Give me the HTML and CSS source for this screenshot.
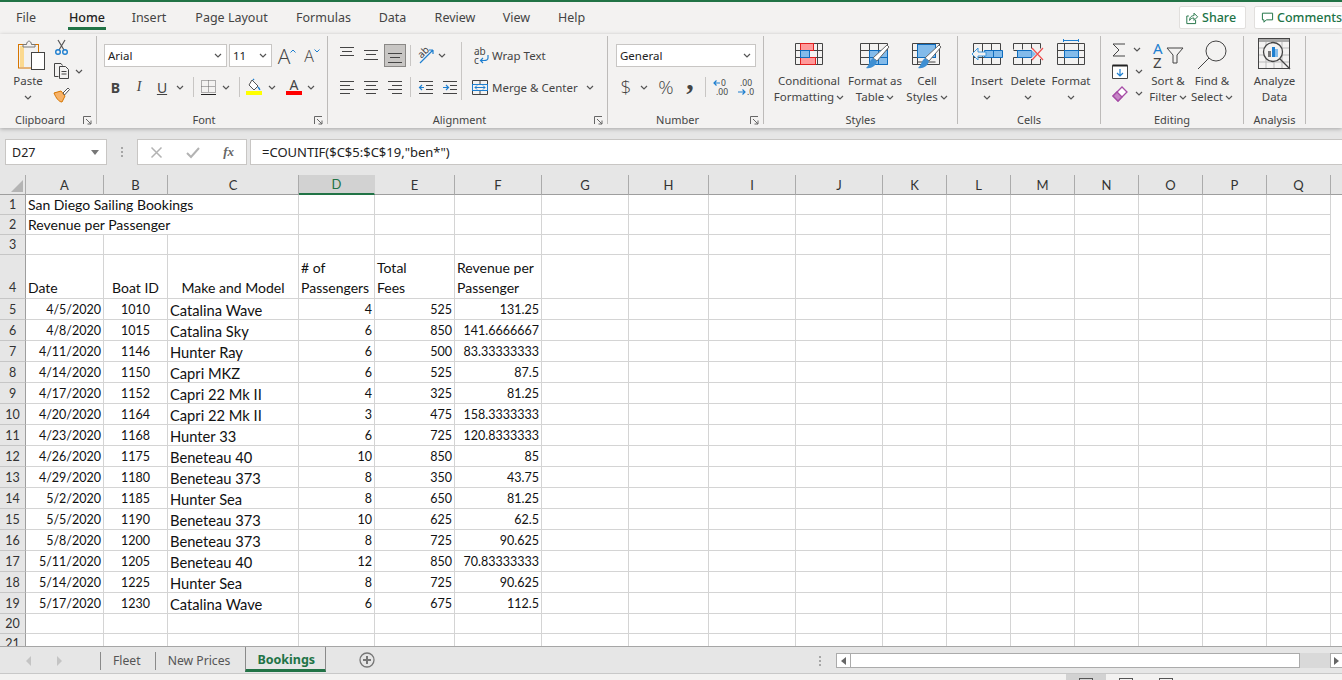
FILE: index.html
```html
<!DOCTYPE html>
<html lang="en">
<head>
<meta charset="utf-8">
<title>Bookings - Excel</title>
<link rel="stylesheet" href="styles.css">
</head>
<body>
<svg class="sprite" aria-hidden="true">
  <symbol id="chev" viewBox="0 0 8 5"><path d="M1 1l3 3 3-3" fill="none" stroke="#555" stroke-width="1.2"/></symbol>
  <symbol id="launch" viewBox="0 0 9 9"><path d="M.5 8V.5H8M3 3l5 5M8 4.5V8H4.5" fill="none" stroke="#666"/></symbol>
  <symbol id="brush" viewBox="0 0 24 26"><path d="M21 1l2 2-12 14-4-3z" fill="#fff" stroke="#666"/><path d="M7 14l4 3c-1 5-6 8-11 7 3-2 3-7 7-10z" fill="#3f8fd2"/></symbol>
</svg>

<div class="accent"></div>

<header class="tabs">
  <nav class="tablist">
    <span class="tab">File</span>
    <span class="tab tab-on">Home</span>
    <span class="tab">Insert</span>
    <span class="tab">Page Layout</span>
    <span class="tab">Formulas</span>
    <span class="tab">Data</span>
    <span class="tab">Review</span>
    <span class="tab">View</span>
    <span class="tab">Help</span>
  </nav>
  <button class="pill pill-share">
    <svg width="12" height="12" viewBox="0 0 15 15"><path d="M3.500 5H1v9.500h11V10M4.500 10.500c0-4.500 3-6 5.500-6V1.500l4.500 4.500L10 10.500V7.500c-2.500 0-4.500.8-5.500 3z" fill="none" stroke="#217346" stroke-width="1.200"/></svg>
    Share
  </button>
  <button class="pill pill-comments">
    <svg width="11" height="11" viewBox="0 0 14 14"><path d="M.5 1.500h13v8.500h-8l-3 3v-3h-2z" fill="none" stroke="#217346" stroke-width="1.250"/></svg>
    Comments
  </button>
</header>

<section class="ribbon">
  <!-- Clipboard -->
  <div class="group g-clip">
    <div class="body clip-body">
      <div class="big paste-col">
        <div class="big-icon">
          <svg width="28" height="31" viewBox="0 0 28 31"><rect x=".5" y="4.500" width="20" height="23.500" fill="#f3f2f1" stroke="#d67500"/><rect x="2" y="6" width="4" height="21" fill="#fbd98f"/><path d="M5 7V4.500h3.500C9 0 13 0 13.500 4.500H17V7z" fill="#f3f2f1" stroke="#777"/><rect x="13.500" y="12.500" width="13" height="17" fill="#fff" stroke="#444"/></svg>
        </div>
        <span>Paste</span>
        <svg class="chev chev-line"><use href="#chev"/></svg>
      </div>
      <div class="clip-stack">
        <div class="clip-row">
          <svg width="17" height="16" viewBox="0 0 17 16"><path d="M5 1l6 10M12 1L6 11" fill="none" stroke="#555" stroke-width="1.200"/><circle cx="5" cy="13" r="2.300" fill="none" stroke="#1e7fd0" stroke-width="1.400"/><circle cx="12" cy="13" r="2.300" fill="none" stroke="#1e7fd0" stroke-width="1.400"/></svg>
        </div>
        <div class="clip-row">
          <svg width="17" height="16" viewBox="0 0 17 16"><path d="M5.500 13.500H1.500V.5H8l1.500 2" fill="none" stroke="#444"/><path d="M6.500 3.500h6l3 3v9h-9zM8.500 8.500h5M8.500 11h5" fill="#f3f2f1" stroke="#444"/></svg>
          <svg class="chev"><use href="#chev"/></svg>
        </div>
        <div class="clip-row">
          <svg width="17" height="16" viewBox="0 0 17 16"><path d="M1 6l7-2 4 5-3 6C6 15 3 11 1 6z" fill="#f7b267" stroke="#d67500"/><path d="M10 6l5-5 1.500 1.500-5 5.500z" fill="#fff" stroke="#555"/></svg>
        </div>
      </div>
    </div>
    <div class="label"><span></span><span>Clipboard</span><svg class="launch"><use href="#launch"/></svg></div>
  </div>

  <!-- Font -->
  <div class="group g-font">
    <div class="body">
      <div class="row row-top">
        <div class="combo w123"><span>Arial</span><svg class="chev"><use href="#chev"/></svg></div>
        <div class="combo w43 ml2"><span>11</span><svg class="chev"><use href="#chev"/></svg></div>
        <span class="tool w26 ml2 grow-a">A<svg class="caret" width="6" height="4" viewBox="0 0 6 4"><path d="M.5 3.500L3 1l2.500 2.500" fill="none" stroke="#1e7fd0"/></svg></span>
        <span class="tool w24 shrink-a">A<svg class="caret" width="6" height="4" viewBox="0 0 6 4"><path d="M.5.5L3 3 5.500.5" fill="none" stroke="#1e7fd0"/></svg></span>
      </div>
      <div class="row row-low">
        <span class="tool w23 glyph bold">B</span>
        <span class="tool w24 glyph italic">I</span>
        <span class="tool w22 glyph under">U</span>
        <span class="tool w14"><svg class="chev"><use href="#chev"/></svg></span>
        <span class="tool w12"><i class="vsep"></i></span>
        <span class="tool w19"><svg width="15" height="15" viewBox="0 0 15 15"><path d="M.5.5h14v12H.5zM7.500.5v12M.5 6.500h14" fill="none" stroke="#666" stroke-dasharray="1 1"/><path d="M0 14.500h15" stroke="#222"/></svg></span>
        <span class="tool w16"><svg class="chev"><use href="#chev"/></svg></span>
        <span class="tool w10"><i class="vsep"></i></span>
        <span class="tool w20 colored">
          <svg width="14" height="12" viewBox="0 0 14 12"><path d="M5 1l6 6-4 4-5-5z" fill="#fff" stroke="#555"/><path d="M11 8c1 1 2 2 1.500 3M6 1l1-1" fill="none" stroke="#1e7fd0" stroke-width="1.500"/></svg>
          <i class="bar bar-yellow"></i>
        </span>
        <span class="tool w16"><svg class="chev"><use href="#chev"/></svg></span>
        <span class="tool w20 ml4 colored"><span class="font-a">A</span><i class="bar bar-red"></i></span>
        <span class="tool w14"><svg class="chev"><use href="#chev"/></svg></span>
      </div>
    </div>
    <div class="label"><span></span><span>Font</span><svg class="launch"><use href="#launch"/></svg></div>
  </div>

  <!-- Alignment -->
  <div class="group g-align">
    <div class="body align-body">
      <div class="stack">
        <div class="row row-top">
          <span class="tool w22"><svg width="14" height="23" viewBox="0 0 14 23"><path d="M0 3.500h14M2 7.500h10M0 11.500h14" stroke="#444"/></svg></span>
          <span class="tool w26"><svg width="14" height="23" viewBox="0 0 14 23"><path d="M0 6.500h14M2 10.500h10M0 15.500h14" stroke="#444"/></svg></span>
          <span class="tool w22 tool-on"><svg width="14" height="21" viewBox="0 0 14 21"><path d="M0 8.500h14M2 12.500h10M0 17.500h14" stroke="#444"/></svg></span>
          <span class="tool w8"><i class="vsep vsep-top"></i></span>
          <span class="tool w24"><svg width="16" height="17" viewBox="0 0 16 17"><path d="M2 16L15 3M15 3h-4M15 3v4" fill="none" stroke="#1e7fd0" stroke-width="1.200"/><text x="0" y="9" class="svg-txt" transform="rotate(-45 5 6)">ab</text></svg></span>
          <span class="tool w8"><svg class="chev"><use href="#chev"/></svg></span>
        </div>
        <div class="row row-low">
          <span class="tool w22"><svg width="14" height="14" viewBox="0 0 14 14"><path d="M0 1.500h14M0 5.500h10M0 9.500h14M0 13.500h10" stroke="#444"/></svg></span>
          <span class="tool w26"><svg width="14" height="14" viewBox="0 0 14 14"><path d="M0 1.500h14M2 5.500h10M0 9.500h14M2 13.500h10" stroke="#444"/></svg></span>
          <span class="tool w22"><svg width="14" height="14" viewBox="0 0 14 14"><path d="M0 1.500h14M4 5.500h10M0 9.500h14M4 13.500h10" stroke="#444"/></svg></span>
          <span class="tool w8"><i class="vsep"></i></span>
          <span class="tool w24"><svg width="14" height="14" viewBox="0 0 14 14"><path d="M0 1.500h14M7 5.500h7M7 9.500h7M0 13.500h14" stroke="#444"/><path d="M0 7.500h5M3 5L.5 7.500 3 10" fill="none" stroke="#1e7fd0" stroke-width="1.200"/></svg></span>
          <span class="tool w24"><svg width="14" height="14" viewBox="0 0 14 14"><path d="M0 1.500h14M7 5.500h7M7 9.500h7M0 13.500h14" stroke="#444"/><path d="M0 7.500h5M3 5l2.500 2.500L3 10" fill="none" stroke="#1e7fd0" stroke-width="1.200"/></svg></span>
        </div>
      </div>
      <i class="tall-sep"></i>
      <div class="stack">
        <div class="row row-top">
          <span class="wide-btn wrap-btn">
            <svg width="15" height="18" viewBox="0 0 15 18"><text x="0" y="8" class="svg-txt">ab</text><text x="0" y="17" class="svg-txt">c</text><path d="M14 8v3c0 2-2 2.500-4 2.500H7M9 11l-2.500 2.500L9 16" fill="none" stroke="#1e7fd0" stroke-width="1.200"/></svg>
            Wrap Text
          </span>
        </div>
        <div class="row row-low">
          <span class="wide-btn merge-btn">
            <svg width="16" height="15" viewBox="0 0 16 15"><path d="M.5.5h15v14H.5zM.5 4.500h15M.5 10.500h15M8 .5v4M8 10.500v4" fill="none" stroke="#444"/><rect x=".5" y="4.500" width="15" height="6" fill="#f3f2f1" stroke="#1e7fd0"/><path d="M3 7.500h10M5 5.500l-2 2 2 2M11 5.500l2 2-2 2" fill="none" stroke="#1e7fd0"/></svg>
            Merge &amp; Center
            <svg class="chev merge-chev"><use href="#chev"/></svg>
          </span>
        </div>
      </div>
    </div>
    <div class="label"><span></span><span>Alignment</span><svg class="launch"><use href="#launch"/></svg></div>
  </div>

  <!-- Number -->
  <div class="group g-num">
    <div class="body">
      <div class="row row-top">
        <div class="combo w140"><span>General</span><svg class="chev"><use href="#chev"/></svg></div>
      </div>
      <div class="row row-low">
        <span class="tool w20 glyph big-glyph">$</span>
        <span class="tool w16"><svg class="chev"><use href="#chev"/></svg></span>
        <span class="tool w28 glyph big-glyph">%</span>
        <span class="tool w20 glyph comma">,</span>
        <span class="tool w10"><i class="vsep"></i></span>
        <span class="tool w22"><svg width="17" height="17" viewBox="0 0 17 17"><text x="8" y="7" class="svg-num">0</text><text x="3" y="16" class="svg-num">.00</text><path d="M1 4h6M3.500 1.500L1 4l2.500 2.500" fill="none" stroke="#1e7fd0" stroke-width="1.200"/></svg></span>
        <span class="tool w26"><svg width="17" height="17" viewBox="0 0 17 17"><text x="3" y="7" class="svg-num">.00</text><text x="10" y="16" class="svg-num">.0</text><path d="M1 13h7M5.500 10.500L8 13l-2.500 2.500" fill="none" stroke="#1e7fd0" stroke-width="1.200"/></svg></span>
      </div>
    </div>
    <div class="label"><span></span><span>Number</span><svg class="launch"><use href="#launch"/></svg></div>
  </div>

  <!-- Styles -->
  <div class="group g-styles">
    <div class="body cols">
      <div class="big w74">
        <div class="big-icon pt7">
          <svg width="28" height="22" viewBox="0 0 28 22"><path d="M.5.5h27v21H.5zM5.500.5v21M14.500.5v21M22.500.5v21M.5 7.500h27M.5 14.500h27" fill="none" stroke="#444"/><rect x="5.500" y=".5" width="13" height="7" fill="#ff9999" stroke="#e02020"/><rect x="5.500" y="14.500" width="15" height="7" fill="#ff9999" stroke="#e02020"/><rect x="5.500" y="7.500" width="9" height="7" fill="#83bbea" stroke="#0f6cbd"/></svg>
        </div>
        <span>Conditional</span>
        <span class="drop">Formatting <svg class="chev"><use href="#chev"/></svg></span>
      </div>
      <div class="big w58">
        <div class="big-icon pt7">
          <svg width="30" height="27" viewBox="0 0 30 27"><path d="M.5.5h27v21H.5zM9.500.5v21M18.500.5v21M.5 7.500h27M.5 14.500h27" fill="none" stroke="#444"/><path d="M9.500 7.500h18v14h-18z" fill="#83bbea" stroke="#0f6cbd"/><path d="M18.500 7.500v14M9.500 14.500h18" stroke="#0f6cbd"/><use href="#brush" x="6" y="1" width="24" height="26"/></svg>
        </div>
        <span>Format as</span>
        <span class="drop">Table <svg class="chev"><use href="#chev"/></svg></span>
      </div>
      <div class="big w46">
        <div class="big-icon pt7">
          <svg width="30" height="27" viewBox="0 0 30 27"><path d="M.5.5h27v21H.5zM5.500.5v4M5.500 14.500v7M23.500.5v4M.5 7.500h5M.5 14.500h5" fill="none" stroke="#444"/><rect x="5.500" y="1.500" width="18" height="13" fill="#83bbea" stroke="#0f6cbd"/><path d="M5.500 19h18" stroke="#444"/><use href="#brush" x="6" y="1" width="24" height="26"/></svg>
        </div>
        <span>Cell</span>
        <span class="drop">Styles <svg class="chev"><use href="#chev"/></svg></span>
      </div>
    </div>
    <div class="label label-plain">Styles</div>
  </div>

  <!-- Cells -->
  <div class="group g-cells">
    <div class="body cols">
      <div class="big w42">
        <div class="big-icon pt7">
          <svg width="33" height="22" viewBox="0 0 33 22"><path d="M2.500.5h27v21h-27zM11.500.5v21M20.500.5v21M2.500 14.500h27" fill="none" stroke="#444"/><path d="M13.500 7.500h18v7h-18z" fill="#83bbea" stroke="#0f6cbd"/><path d="M22.500 7.500v7" stroke="#0f6cbd"/><path d="M15 9H7V5L1 11l6 6v-4h8z" fill="#f3f2f1" stroke="#3a96dd"/></svg>
        </div>
        <span>Insert</span>
        <svg class="chev chev-line"><use href="#chev"/></svg>
      </div>
      <div class="big w40">
        <div class="big-icon pt7">
          <svg width="31" height="22" viewBox="0 0 31 22"><path d="M.5.5h27M.5 21.500h27M.5.5v6M.5 14.500v7M9.500.5v6M9.500 14.500v7M18.500.5v5M18.500 16v5.500M27.500.5v5M27.500 16v5.500" fill="none" stroke="#444"/><path d="M.5 7.500h4M.5 14.500h4" stroke="#444"/><rect x="4.500" y="7.500" width="14" height="7" fill="#83bbea" stroke="#0f6cbd"/><path d="M18.500 7.500l4 3.500-4 3.500" fill="#83bbea" stroke="#83bbea"/><path d="M19 5l11 12M30 5L19 17" stroke="#f05050" stroke-width="1.200"/></svg>
        </div>
        <span>Delete</span>
        <svg class="chev chev-line"><use href="#chev"/></svg>
      </div>
      <div class="big w46">
        <div class="big-icon pt3">
          <svg width="28" height="26" viewBox="0 0 28 26"><path d="M6 1.500h16M6.500 0v3M21.500 0v3" stroke="#1e7fd0" fill="none"/><path d="M.5 4.500h27v21H.5zM7.500 4.500v21M21.500 4.500v21M.5 11.500h27M.5 18.500h27" fill="none" stroke="#444"/><rect x="7.500" y="11.500" width="14" height="7" fill="#83bbea" stroke="#0f6cbd"/></svg>
        </div>
        <span>Format</span>
        <svg class="chev chev-line"><use href="#chev"/></svg>
      </div>
    </div>
    <div class="label label-plain">Cells</div>
  </div>

  <!-- Editing -->
  <div class="group g-edit">
    <div class="body cols">
      <div class="edit-stack">
        <div class="edit-row sum-row">
          <svg width="14" height="14" viewBox="0 0 14 14"><path d="M13 1H1l6 6-6 6h12" fill="none" stroke="#444"/></svg>
          <svg class="chev"><use href="#chev"/></svg>
        </div>
        <div class="edit-row">
          <svg width="16" height="15" viewBox="0 0 16 15"><path d="M.5 1.500h15v13H.5z" fill="#fff" stroke="#444"/><path d="M.5 1.500h15" stroke="#222" stroke-width="2"/><path d="M8 5v7M5 9l3 3 3-3" fill="none" stroke="#1e7fd0" stroke-width="1.200"/></svg>
          <svg class="chev"><use href="#chev"/></svg>
        </div>
        <div class="edit-row">
          <svg width="16" height="16" viewBox="0 0 16 16"><path d="M1 10l9-9 5 5-9 9z" fill="#fff" stroke="#a64ca6" stroke-width="1.300"/><path d="M1 10l4-4 5 5-4 4z" fill="#c685c6" stroke="#a64ca6" stroke-width="1.300"/></svg>
          <svg class="chev"><use href="#chev"/></svg>
        </div>
      </div>
      <div class="big w46">
        <div class="big-icon pt5">
          <svg width="31" height="28" viewBox="0 0 31 28"><text x="0" y="13" class="svg-az svg-blue">A</text><text x="0" y="27" class="svg-az">Z</text><path d="M14 7h16l-6 7v8h-4v-8z" fill="#f3f2f1" stroke="#444"/></svg>
        </div>
        <span>Sort &amp;</span>
        <span class="drop">Filter <svg class="chev"><use href="#chev"/></svg></span>
      </div>
      <div class="big w42">
        <div class="big-icon pt4">
          <svg width="30" height="30" viewBox="0 0 30 30"><circle cx="19" cy="11" r="10" fill="none" stroke="#444"/><path d="M12 18L1 29" stroke="#444"/></svg>
        </div>
        <span>Find &amp;</span>
        <span class="drop">Select <svg class="chev"><use href="#chev"/></svg></span>
      </div>
    </div>
    <div class="label label-plain">Editing</div>
  </div>

  <!-- Analysis -->
  <div class="group g-an">
    <div class="body cols">
      <div class="big w61">
        <div class="big-icon pt2">
          <svg width="33" height="33" viewBox="0 0 33 33"><rect x=".5" y=".5" width="31" height="30" fill="#f3f2f1" stroke="#444"/><rect x="1" y="1" width="30" height="3" fill="#a8a8a8"/><path d="M1 10h30M1 17h30M1 24h30M8 4v26M16 4v26M24 4v26" stroke="#bbb" fill="none"/><circle cx="15" cy="14" r="9.500" fill="#f3f2f1" stroke="#444" stroke-width="1.300"/><rect x="10" y="13" width="3" height="6" fill="#777"/><rect x="14" y="9" width="3" height="10" fill="#1e7fd0"/><rect x="17" y="11" width="3" height="8" fill="#83bbea"/><path d="M22 21l10 10" stroke="#444" stroke-width="1.300"/></svg>
        </div>
        <span>Analyze</span>
        <span>Data</span>
      </div>
    </div>
    <div class="label label-plain">Analysis</div>
  </div>
</section>

<section class="formula">
  <div class="namebox"><span>D27</span><i class="down-tri"></i></div>
  <div class="fdots"><i></i><i></i><i></i></div>
  <div class="fbtns">
    <svg width="13" height="13" viewBox="0 0 13 13"><path d="M1.500 1.500l10 10M11.500 1.500l-10 10" stroke="#b3b3b3" stroke-width="1.500"/></svg>
    <svg width="14" height="13" viewBox="0 0 14 13"><path d="M1 7l4 4 8-9" fill="none" stroke="#b3b3b3" stroke-width="2"/></svg>
    <span class="fx">fx</span>
  </div>
  <div class="fbox">=COUNTIF($C$5:$C$19,"ben*")</div>
</section>

<main class="sheet">
<table class="grid">
  <colgroup>
    <col class="c-rh"><col class="c-a"><col class="c-b"><col class="c-c"><col class="c-d"><col class="c-e"><col class="c-f"><col class="c-g"><col class="c-h"><col class="c-i"><col class="c-j"><col class="c-k"><col class="c-k"><col class="c-k"><col class="c-k"><col class="c-k"><col class="c-k"><col class="c-k"><col class="c-r">
  </colgroup>
  <thead>
    <tr class="colhead">
      <th class="corner"><i></i></th><th>A</th><th>B</th><th>C</th><th class="col-on">D</th><th>E</th><th>F</th><th>G</th><th>H</th><th>I</th><th>J</th><th>K</th><th>L</th><th>M</th><th>N</th><th>O</th><th>P</th><th>Q</th><th></th>
    </tr>
  </thead>
  <tbody>
    <tr class="h20"><th>1</th><td colspan="3">San Diego Sailing Bookings</td><td></td><td></td><td></td><td></td><td></td><td></td><td></td><td></td><td></td><td></td><td></td><td></td><td></td><td></td></tr>
    <tr class="h20"><th>2</th><td colspan="3">Revenue per Passenger</td><td></td><td></td><td></td><td></td><td></td><td></td><td></td><td></td><td></td><td></td><td></td><td></td><td></td><td></td></tr>
    <tr class="h20"><th>3</th><td></td><td></td><td></td><td></td><td></td><td></td><td></td><td></td><td></td><td></td><td></td><td></td><td></td><td></td><td></td><td></td><td></td></tr>
    <tr class="h44"><th>4</th><td>Date</td><td class="ctr">Boat ID</td><td class="ctr">Make and Model</td><td># of<br>Passengers</td><td>Total<br>Fees</td><td>Revenue per<br>Passenger</td><td></td><td></td><td></td><td></td><td></td><td></td><td></td><td></td><td></td><td></td><td></td><td></td></tr>
    <tr><th>5</th><td class="num">4/5/2020</td><td class="id">1010</td><td class="mk">Catalina Wave</td><td class="num">4</td><td class="num">525</td><td class="num">131.25</td><td></td><td></td><td></td><td></td><td></td><td></td><td></td><td></td><td></td><td></td><td></td><td></td></tr>
    <tr><th>6</th><td class="num">4/8/2020</td><td class="id">1015</td><td class="mk">Catalina Sky</td><td class="num">6</td><td class="num">850</td><td class="num">141.6666667</td><td></td><td></td><td></td><td></td><td></td><td></td><td></td><td></td><td></td><td></td><td></td><td></td></tr>
    <tr><th>7</th><td class="num">4/11/2020</td><td class="id">1146</td><td class="mk">Hunter Ray</td><td class="num">6</td><td class="num">500</td><td class="num">83.33333333</td><td></td><td></td><td></td><td></td><td></td><td></td><td></td><td></td><td></td><td></td><td></td><td></td></tr>
    <tr><th>8</th><td class="num">4/14/2020</td><td class="id">1150</td><td class="mk">Capri MKZ</td><td class="num">6</td><td class="num">525</td><td class="num">87.5</td><td></td><td></td><td></td><td></td><td></td><td></td><td></td><td></td><td></td><td></td><td></td><td></td></tr>
    <tr><th>9</th><td class="num">4/17/2020</td><td class="id">1152</td><td class="mk">Capri 22 Mk II</td><td class="num">4</td><td class="num">325</td><td class="num">81.25</td><td></td><td></td><td></td><td></td><td></td><td></td><td></td><td></td><td></td><td></td><td></td><td></td></tr>
    <tr><th>10</th><td class="num">4/20/2020</td><td class="id">1164</td><td class="mk">Capri 22 Mk II</td><td class="num">3</td><td class="num">475</td><td class="num">158.3333333</td><td></td><td></td><td></td><td></td><td></td><td></td><td></td><td></td><td></td><td></td><td></td><td></td></tr>
    <tr><th>11</th><td class="num">4/23/2020</td><td class="id">1168</td><td class="mk">Hunter 33</td><td class="num">6</td><td class="num">725</td><td class="num">120.8333333</td><td></td><td></td><td></td><td></td><td></td><td></td><td></td><td></td><td></td><td></td><td></td><td></td></tr>
    <tr><th>12</th><td class="num">4/26/2020</td><td class="id">1175</td><td class="mk">Beneteau 40</td><td class="num">10</td><td class="num">850</td><td class="num">85</td><td></td><td></td><td></td><td></td><td></td><td></td><td></td><td></td><td></td><td></td><td></td><td></td></tr>
    <tr><th>13</th><td class="num">4/29/2020</td><td class="id">1180</td><td class="mk">Beneteau 373</td><td class="num">8</td><td class="num">350</td><td class="num">43.75</td><td></td><td></td><td></td><td></td><td></td><td></td><td></td><td></td><td></td><td></td><td></td><td></td></tr>
    <tr><th>14</th><td class="num">5/2/2020</td><td class="id">1185</td><td class="mk">Hunter Sea</td><td class="num">8</td><td class="num">650</td><td class="num">81.25</td><td></td><td></td><td></td><td></td><td></td><td></td><td></td><td></td><td></td><td></td><td></td><td></td></tr>
    <tr><th>15</th><td class="num">5/5/2020</td><td class="id">1190</td><td class="mk">Beneteau 373</td><td class="num">10</td><td class="num">625</td><td class="num">62.5</td><td></td><td></td><td></td><td></td><td></td><td></td><td></td><td></td><td></td><td></td><td></td><td></td></tr>
    <tr><th>16</th><td class="num">5/8/2020</td><td class="id">1200</td><td class="mk">Beneteau 373</td><td class="num">8</td><td class="num">725</td><td class="num">90.625</td><td></td><td></td><td></td><td></td><td></td><td></td><td></td><td></td><td></td><td></td><td></td><td></td></tr>
    <tr><th>17</th><td class="num">5/11/2020</td><td class="id">1205</td><td class="mk">Beneteau 40</td><td class="num">12</td><td class="num">850</td><td class="num">70.83333333</td><td></td><td></td><td></td><td></td><td></td><td></td><td></td><td></td><td></td><td></td><td></td><td></td></tr>
    <tr><th>18</th><td class="num">5/14/2020</td><td class="id">1225</td><td class="mk">Hunter Sea</td><td class="num">8</td><td class="num">725</td><td class="num">90.625</td><td></td><td></td><td></td><td></td><td></td><td></td><td></td><td></td><td></td><td></td><td></td><td></td></tr>
    <tr><th>19</th><td class="num">5/17/2020</td><td class="id">1230</td><td class="mk">Catalina Wave</td><td class="num">6</td><td class="num">675</td><td class="num">112.5</td><td></td><td></td><td></td><td></td><td></td><td></td><td></td><td></td><td></td><td></td><td></td><td></td></tr>
    <tr class="h20"><th>20</th><td></td><td></td><td></td><td></td><td></td><td></td><td></td><td></td><td></td><td></td><td></td><td></td><td></td><td></td><td></td><td></td><td></td><td></td></tr>
    <tr class="h20"><th>21</th><td></td><td></td><td></td><td></td><td></td><td></td><td></td><td></td><td></td><td></td><td></td><td></td><td></td><td></td><td></td><td></td><td></td><td></td></tr>
  </tbody>
</table>
</main>

<footer class="sheetbar">
  <div class="nav">
    <svg width="6" height="10" viewBox="0 0 6 10"><path d="M5 0v10L0 5z" fill="#c4c4c4"/></svg>
    <svg width="6" height="10" viewBox="0 0 6 10"><path d="M1 0v10l5-5z" fill="#c4c4c4"/></svg>
  </div>
  <span class="stab">Fleet</span>
  <span class="stab">New Prices</span>
  <span class="stab stab-on">Bookings</span>
  <svg class="addsheet" width="16" height="16" viewBox="0 0 16 16"><circle cx="8" cy="8" r="7" fill="none" stroke="#777" stroke-width="1.300"/><path d="M8 4v8M4 8h8" stroke="#777" stroke-width="2"/></svg>
  <div class="hscroll">
    <div class="fdots sdots"><i></i><i></i><i></i></div>
    <span class="sbtn"><svg width="5" height="8" viewBox="0 0 5 8"><path d="M5 0v8L0 4z" fill="#666"/></svg></span>
    <span class="thumb"></span>
    <span class="track"></span>
    <span class="sbtn sbtn-r"><svg width="5" height="8" viewBox="0 0 5 8"><path d="M0 0v8l5-4z" fill="#666"/></svg></span>
  </div>
</footer>

<div class="status">
  <span class="view view-on"><i></i></span>
  <span class="view"><i></i></span>
  <span class="view"><i></i></span>
</div>
</body>
</html>
```

FILE: styles.css
```css
* { box-sizing: border-box; }
html, body { margin: 0; padding: 0; }
body {
  width: 1342px;
  height: 680px;
  overflow: hidden;
  display: flex;
  flex-direction: column;
  background: #f3f2f1;
  color: #444;
  font-family: "Noto Sans", "Open Sans", sans-serif;
  font-size: 11.5px;
}
.sprite { width: 0; height: 0; position: absolute; }
svg { overflow: visible; }
i { display: block; font-style: normal; }

.accent { height: 2px; background: #217346; flex: none; }

/* tabs */
.tabs { height: 32px; flex: none; display: flex; align-items: flex-start; overflow: hidden; }
.tablist {
  flex: 0 0 1179px; display: grid; justify-items: center; padding-left: 8px;
  grid-template-columns: 36px 86px 38px 127px 57px 81px 44px 79px 31px;
}
.tab { height: 25px; line-height: 31px; font-size: 12.5px; color: #444; white-space: nowrap; }
.tab-on { color: #222; font-weight: 500; padding: 0 1px; border-bottom: 3px solid #217346; box-sizing: content-box; }
.pill {
  flex: none; height: 23px; margin-top: 4px; padding: 0 6px;
  display: flex; align-items: center; gap: 4px;
  background: #fff; border: 1px solid #e1dfdd; border-radius: 2px;
  color: #217346; font: 500 12.5px "Noto Sans", sans-serif;
}
.pill-share { width: 67px; }
.pill-comments { width: 100px; margin-left: 8px; padding-left: 7px; justify-content: flex-start; }

/* ribbon */
.ribbon {
  height: 94px; flex: none; display: flex; padding: 2px 0 4px;
  background: #f3f2f1; position: relative; z-index: 2;
  box-shadow: 0 1px 4px rgba(0,0,0,.28);
}
.group { height: 88px; border-right: 1px solid #bdbbb9; display: flex; flex-direction: column; flex: none; }
.g-clip { width: 97px; }
.g-font { width: 231px; }
.g-align { width: 280px; }
.g-num { width: 156px; }
.g-styles { width: 194px; }
.g-cells { width: 143px; }
.g-edit { width: 143px; }
.g-an { width: 62px; }
.body { height: 76px; flex: none; padding: 8px 0 0 7px; }
.g-num .body { padding-left: 8px; }
.label {
  height: 16px; margin-bottom: -4px; padding-right: 16px; font-size: 11px; line-height: 16px;
  display: grid; grid-template-columns: 1fr auto 1fr; align-items: center; text-align: center; color: #444;
}
.label-plain { display: block; padding-right: 0; }
.launch { width: 9px; height: 9px; justify-self: end; margin-right: -12px; }

.row { display: flex; align-items: center; }
.row-top { height: 23px; margin-bottom: 10px; }
.row-low { height: 20px; }
.tool { display: flex; align-items: center; justify-content: center; flex: none; height: 100%; }
.w8 { width: 8px; } .w10 { width: 10px; } .w12 { width: 12px; } .w14 { width: 14px; } .w16 { width: 16px; }
.w19 { width: 19px; } .w20 { width: 20px; } .w22 { width: 22px; } .w23 { width: 23px; } .w24 { width: 24px; }
.w26 { width: 26px; } .w28 { width: 28px; } .w40 { width: 40px; } .w42 { width: 42px; } .w43 { width: 43px; }
.w46 { width: 46px; } .w58 { width: 58px; } .w61 { width: 61px; } .w74 { width: 74px; } .w123 { width: 123px; } .w140 { width: 140px; }
.ml2 { margin-left: 2px; } .ml4 { margin-left: 4px; }

.chev { width: 8px; height: 5px; display: inline-block; flex: none; }
.chev-line { margin-top: 6px; display: block; }
.combo {
  height: 23px; flex: none; display: flex; align-items: center; justify-content: space-between;
  padding: 0 4px 0 3px; background: #fff; border: 1px solid #c8c6c4; color: #222; font-size: 11.5px;
}
.grow-a { font-size: 21px; font-weight: 300; font-family: "Open Sans", sans-serif; color: #444; }
.shrink-a { font-size: 16px; font-weight: 300; font-family: "Open Sans", sans-serif; color: #444; }
.caret { margin-bottom: 10px; }
.glyph { font-size: 14px; color: #444; }
.bold { font-weight: 700; }
.italic { font-style: italic; font-family: "Liberation Serif", serif; }
.under { text-decoration: underline; }
.big-glyph { font-size: 19px; font-weight: 300; font-family: "Open Sans", sans-serif; }
.comma { font: 700 30px/14px "Liberation Serif", serif; padding-bottom: 16px; }
.vsep { width: 1px; height: 20px; background: #c8c6c4; }
.vsep-top { height: 21px; }
.colored { flex-direction: column; justify-content: flex-end; padding-bottom: 2px; }
.font-a { font-size: 14px; line-height: 13px; }
.bar { width: 16px; height: 4px; flex: none; }
.bar-yellow { background: #ffff00; }
.bar-red { background: #ff0000; }
.tool-on { background: #c8c6c4; border: 1px solid #8a8886; height: 23px; }

.align-body { display: flex; padding-left: 8px; }
.stack { flex: none; }
.stack:first-child { width: 125px; }
.tall-sep { width: 1px; height: 58px; margin: -2px 0 0 0; background: #c8c6c4; flex: none; }
.wide-btn { display: flex; align-items: center; white-space: nowrap; font-size: 11.5px; }
.wrap-btn { margin-left: 12px; gap: 3px; }
.merge-btn { margin-left: 10px; gap: 4px; }
.merge-chev { margin-left: 4px; }
.svg-txt { font: 10px "Noto Sans", sans-serif; fill: #444; }
.svg-num { font: 8.5px "Noto Sans", sans-serif; fill: #444; }
.svg-az { font: 15px "Noto Sans", sans-serif; fill: #444; }
.svg-blue { fill: #1e7fd0; }

/* big buttons */
.cols { display: flex; padding: 0 0 0 8px; }
.big { display: flex; flex-direction: column; align-items: center; line-height: 16px; flex: none; white-space: nowrap; }
.big-icon { height: 37px; flex: none; display: flex; justify-content: center; }
.pt2 { padding-top: 2px; } .pt3 { padding-top: 3px; } .pt4 { padding-top: 4px; } .pt5 { padding-top: 5px; } .pt7 { padding-top: 7px; }
.drop { display: inline-flex; align-items: center; gap: 2px; }
.g-an .cols { padding-left: 0; }

.clip-body { display: flex; padding: 0 0 0 3px; }
.paste-col { width: 50px; }
.paste-col .big-icon { padding: 4px 0 0 7px; }
.clip-stack { padding-top: 3px; display: flex; flex-direction: column; gap: 8px; }
.clip-row { height: 16px; display: flex; align-items: center; gap: 5px; }

.edit-stack { width: 36px; flex: none; display: flex; flex-direction: column; padding: 6px 0 0 3px; gap: 7px; }
.edit-row { height: 15px; display: flex; align-items: center; gap: 7px; }
.sum-row { gap: 7px; }

/* formula bar */
.formula {
  height: 47px; flex: none; display: flex; align-items: flex-start; padding: 11px 0 0 5px;
  background: #e6e6e6; color: #222; font-size: 13px;
}
.namebox {
  width: 102px; height: 26px; flex: none; display: flex; align-items: center; justify-content: space-between;
  padding: 0 7px 0 6px; background: #fff; border: 1px solid #c8c6c4; font-size: 12.5px;
}
.down-tri { width: 0; height: 0; border: 4px solid transparent; border-top: 5px solid #777; border-bottom: 0; }
.fdots { width: 30px; height: 26px; flex: none; display: flex; flex-direction: column; align-items: center; justify-content: center; gap: 2px; }
.fdots i { width: 2px; height: 2px; background: #a6a6a6; }
.fbtns {
  width: 110px; height: 26px; flex: none; display: flex; align-items: center; justify-content: space-between;
  padding: 0 12px; background: #fff; border: 1px solid #c8c6c4;
}
.fx { font: italic 700 13px "Liberation Serif", serif; color: #666; }
.fbox {
  flex: 1; height: 26px; margin-left: 3px; padding-left: 11px; line-height: 24px;
  background: #fff; border: 1px solid #c8c6c4; border-right: 0; white-space: nowrap;
}

/* sheet */
.sheet { height: 471px; flex: none; overflow: hidden; background: #fff; }
.grid { border-collapse: separate; border-spacing: 0; table-layout: fixed; width: 1342px; font-family: Lato, "Noto Sans", sans-serif; font-size: 14px; color: #111; }
.c-rh { width: 26px; } .c-a { width: 78px; } .c-b { width: 64px; } .c-c { width: 131px; } .c-d { width: 76px; }
.c-e { width: 80px; } .c-f { width: 87px; } .c-g { width: 87px; } .c-h { width: 80px; } .c-i { width: 87px; }
.c-j { width: 87px; } .c-k { width: 64px; } .c-r { width: 12px; }
.grid tr { height: 21px; }
.grid tr.h20 { height: 20px; }
.grid tr.h44 { height: 44px; }
.grid td {
  padding: 2px 2px 0; border-right: 1px solid #d4d4d4; border-bottom: 1px solid #d4d4d4;
  vertical-align: bottom; line-height: 18px; white-space: nowrap; overflow: visible;
}
.grid .h20 td { padding: 0 2px; line-height: 19px; }
.grid .h44 td { padding: 0 2px; line-height: 20px; }
.grid .num { text-align: right; font-size: 12.5px; }
.grid .id { text-align: center; font-size: 12.5px; }
.grid .ctr { text-align: center; }
.grid .mk { font-size: 14.7px; }
.grid tbody th {
  padding: 0; font-weight: 400; font-size: 12.5px; background: #e6e6e6; color: #333; text-align: center;
  border-right: 1px solid #9e9e9e; border-bottom: 1px solid #c6c6c6;
}
.grid .h44 th { vertical-align: bottom; line-height: 20px; }
.colhead { height: 19px !important; }
.colhead th {
  padding: 0; height: 19px; font-weight: 400; font-size: 13px; background: #e6e6e6; color: #333; text-align: center; line-height: 18px;
  border-right: 1px solid #ababab; border-bottom: 1px solid #9e9e9e;
}
.corner i { width: 0; height: 0; margin: 2px 2px 0 auto; border-style: solid; border-width: 0 0 12px 12px; border-color: transparent transparent #b4b4b4 transparent; }
.colhead .col-on { background: #d2d2d2; color: #217346; border-bottom: 2px solid #217346; border-right-color: #d2d2d2; }

/* sheet tabs */
.sheetbar {
  height: 28px; flex: none; display: flex; align-items: flex-start;
  background: #e6e6e6; border-top: 1px solid #a6a6a6; border-bottom: 1px solid #c8c8c8; position: relative; z-index: 1;
}
.nav { width: 101px; height: 18px; margin-top: 5px; flex: none; display: flex; align-items: center; gap: 24px; padding-left: 26px; border-right: 1px solid #8a8a8a; }
.stab {
  height: 18px; margin-top: 5px; line-height: 18px; flex: none; padding: 0 14px 0 12px; font-size: 12.2px; color: #555; border-right: 1px solid #8a8a8a;
}
.stab:nth-of-type(2) { border-right-color: transparent; }
.stab-on {
  height: 25px; margin: 0; line-height: 26px; padding: 0 11px;
  color: #217346; font-weight: 700; font-size: 12.5px;
  border-left: 1px solid #8a8a8a; border-right: 1px solid #8a8a8a; border-bottom: 3px solid #217346;
  width: 81px; text-align: center;
}
.addsheet { margin: 5px 0 0 33px; flex: none; }
.hscroll { margin: 6px 0 0 auto; flex: none; width: 527px; height: 15px; display: flex; align-items: stretch; }
.sdots { width: 10px; height: 15px; margin-right: 11px; }
.sbtn { width: 15px; flex: none; display: flex; align-items: center; justify-content: center; background: #fff; border: 1px solid #ababab; }
.sbtn-r { width: 12px; border-right: 0; }
.thumb { width: 449px; flex: none; background: #fff; border: 1px solid #ababab; border-left: 0; }
.track { width: 30px; flex: none; background: #d9d9d9; }

/* status */
.status { height: 6px; flex: none; display: flex; padding-left: 1066px; background: #f3f2f1; overflow: hidden; }
.view { width: 40px; height: 6px; flex: none; padding: 4px 0 0 13px; }
.view-on { background: #d2d2d2; }
.view i { width: 14px; height: 6px; border: 1px solid #555; }
```
